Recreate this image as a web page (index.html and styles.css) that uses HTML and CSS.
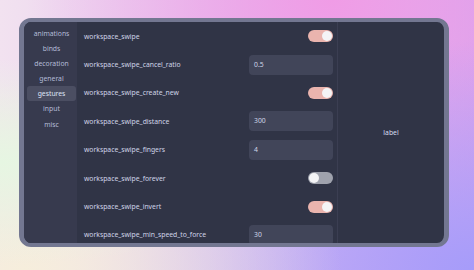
FILE: index.html
```html
<!DOCTYPE html>
<html lang="en">
<head>
  <meta charset="UTF-8" />
  <title>Settings</title>
  <link rel="stylesheet" href="styles.css">
</head>
<body>

<div class="window">
  <nav class="sidebar">
    <div class="tab">animations</div>
    <div class="tab">binds</div>
    <div class="tab">decoration</div>
    <div class="tab">general</div>
    <div class="tab active">gestures</div>
    <div class="tab">input</div>
    <div class="tab">misc</div>
  </nav>

  <div class="options">
    <div class="row">
      <span>workspace_swipe</span>
      <div class="toggle on"><i></i></div>
    </div>
    <div class="row">
      <span>workspace_swipe_cancel_ratio</span>
      <div class="field">0.5</div>
    </div>
    <div class="row">
      <span>workspace_swipe_create_new</span>
      <div class="toggle on"><i></i></div>
    </div>
    <div class="row">
      <span>workspace_swipe_distance</span>
      <div class="field">300</div>
    </div>
    <div class="row">
      <span>workspace_swipe_fingers</span>
      <div class="field">4</div>
    </div>
    <div class="row">
      <span>workspace_swipe_forever</span>
      <div class="toggle"><i></i></div>
    </div>
    <div class="row">
      <span>workspace_swipe_invert</span>
      <div class="toggle on"><i></i></div>
    </div>
    <div class="row">
      <span>workspace_swipe_min_speed_to_force</span>
      <div class="field">30</div>
    </div>
  </div>

  <div class="preview">label</div>
</div>

</body>
</html>
```

FILE: styles.css
```css
body {
  margin: 0;
  width: 474px;
  height: 270px;
  overflow: hidden;
  padding: 18px 0 0 19px;
  box-sizing: border-box;
  font-family: 'Noto Sans', sans-serif;
  font-size: 6.8px;
  background:
    radial-gradient(ellipse at 0% 60%, #e6f6e2 0%, rgba(230,246,226,0) 45%),
    radial-gradient(ellipse at 5% 100%, #f6eedc 0%, rgba(246,238,220,0) 50%),
    radial-gradient(ellipse at 100% 100%, #a69cfa 0%, rgba(166,156,250,0) 60%),
    radial-gradient(ellipse at 70% 0%, #f09ce6 0%, rgba(240,156,230,0) 65%),
    linear-gradient(90deg, #f2e2f0, #d4a8f0);
}

.window {
  width: 430px;
  height: 229px;
  box-sizing: border-box;
  border: 4px solid #737791;
  border-left-width: 5px;
  border-right-width: 5px;
  border-radius: 12px;
  overflow: hidden;
  display: flex;
  background: #303446;
  color: #d0d5e8;
}

.sidebar {
  width: 53px;
  flex: none;
  background: #373a4e;
  padding-top: 3.5px;
}

.tab {
  height: 15.2px;
  line-height: 15.2px;
  text-align: center;
  color: #b5bcd8;
  margin: 0 1px 0 3px;
  border-radius: 3px;
}

.tab.active {
  background: #4b4e62;
  color: #dfe4f6;
}

.options {
  width: 261px;
  flex: none;
  padding: 0 4px 0 7px;
  box-sizing: border-box;
  border-right: 1px solid #3b3e52;
}

.row {
  height: 28.4px;
  display: flex;
  align-items: center;
  justify-content: space-between;
}

.field {
  width: 84px;
  height: 20px;
  line-height: 20px;
  padding-left: 5px;
  box-sizing: border-box;
  background: #414559;
  border-radius: 4px;
}

.toggle {
  width: 25px;
  height: 12px;
  border-radius: 6px;
  background: #9fa2ad;
  display: flex;
  align-items: center;
  padding: 0 1px;
  box-sizing: border-box;
}

.toggle i {
  width: 10px;
  height: 10px;
  border-radius: 50%;
  background: #f4f4f6;
}

.toggle.on {
  background: #eab4ae;
  justify-content: flex-end;
}

.preview {
  flex: 1;
  display: flex;
  align-items: center;
  justify-content: center;
  color: #d8def2;
}
```
